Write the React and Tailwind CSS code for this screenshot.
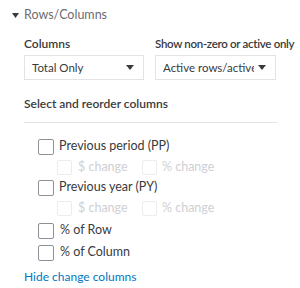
import React from "react";

function Box({ disabled }) {
  return (
    <span
      className={
        "inline-block shrink-0 rounded-[2px] border bg-white " +
        (disabled ? "h-[15px] w-[15px] border-[#ececec]" : "h-[16px] w-[16px] border-[#8d9096]")
      }
    />
  );
}

function Caret() {
  return (
    <svg width="8" height="5" viewBox="0 0 8 5" className="shrink-0">
      <path d="M0 0 L8 0 L4 5 Z" fill="#393a3d" />
    </svg>
  );
}

export default function App() {
  return (
    <div
      className="h-[288px] w-[300px] overflow-hidden bg-white text-[#393a3d]"
      style={{ fontFamily: "Lato, 'Open Sans', sans-serif" }}
    >
      <div className="flex h-[20px] items-center pl-[12px] pt-[10px]">
        <svg width="7" height="5" viewBox="0 0 7 5" className="mr-[5px]">
          <path d="M0 0 L7 0 L3.5 5 Z" fill="#393a3d" />
        </svg>
        <span className="text-[12.5px] text-[#6b6c72]">Rows/Columns</span>
      </div>

      <div className="pl-[24px] pr-[24px]">
        <div className="mt-[16px] flex gap-[11px]">
          <div className="w-[120px]">
            <div className="h-[16px] text-[12px] font-semibold leading-[16px]">Columns</div>
            <div className="mt-[3px] flex h-[25px] items-center justify-between border border-[#e3e3e3] pl-[7px] pr-[9px] text-[11.5px]">
              <span>Total Only</span>
              <Caret />
            </div>
          </div>
          <div className="w-[121px]">
            <div className="h-[16px] whitespace-nowrap text-[11.5px] font-semibold leading-[16px] tracking-[-0.3px]">
              Show non-zero or active only
            </div>
            <div className="mt-[3px] flex h-[25px] items-center border border-[#e3e3e3] pl-[7px] text-[11.5px]">
              <span className="min-w-0 flex-1 overflow-hidden whitespace-nowrap">Active rows/active columns</span>
              <span className="flex h-full items-center bg-white pl-[4px] pr-[9px]">
                <Caret />
              </span>
            </div>
          </div>
        </div>

        <div className="mt-[16px] text-[12px] font-semibold leading-[16px]">Select and reorder columns</div>
        <div className="mt-[10px] h-px w-[253px] bg-[#e3e3e3]" />

        <div className="mt-[15px] pl-[14px] text-[12.5px]">
          <div className="flex h-[17px] items-center gap-[5px]">
            <Box />
            <span>Previous period (PP)</span>
          </div>
          <div className="mt-[5px] flex h-[15px] items-center pl-[19px] text-[#cfd0d3]">
            <div className="flex w-[85px] items-center gap-[6px]">
              <Box disabled />
              <span>$ change</span>
            </div>
            <div className="flex items-center gap-[5px]">
              <Box disabled />
              <span>% change</span>
            </div>
          </div>
          <div className="mt-[4px] flex h-[17px] items-center gap-[5px]">
            <Box />
            <span>Previous year (PY)</span>
          </div>
          <div className="mt-[5px] flex h-[15px] items-center pl-[19px] text-[#cfd0d3]">
            <div className="flex w-[85px] items-center gap-[6px]">
              <Box disabled />
              <span>$ change</span>
            </div>
            <div className="flex items-center gap-[5px]">
              <Box disabled />
              <span>% change</span>
            </div>
          </div>
          <div className="mt-[6px] flex h-[17px] items-center gap-[6px]">
            <Box />
            <span>% of Row</span>
          </div>
          <div className="mt-[5px] flex h-[17px] items-center gap-[6px]">
            <Box />
            <span>% of Column</span>
          </div>
        </div>

        <div className="mt-[8px] text-[12px] leading-[16px] text-[#0077c5]">Hide change columns</div>
      </div>
    </div>
  );
}
